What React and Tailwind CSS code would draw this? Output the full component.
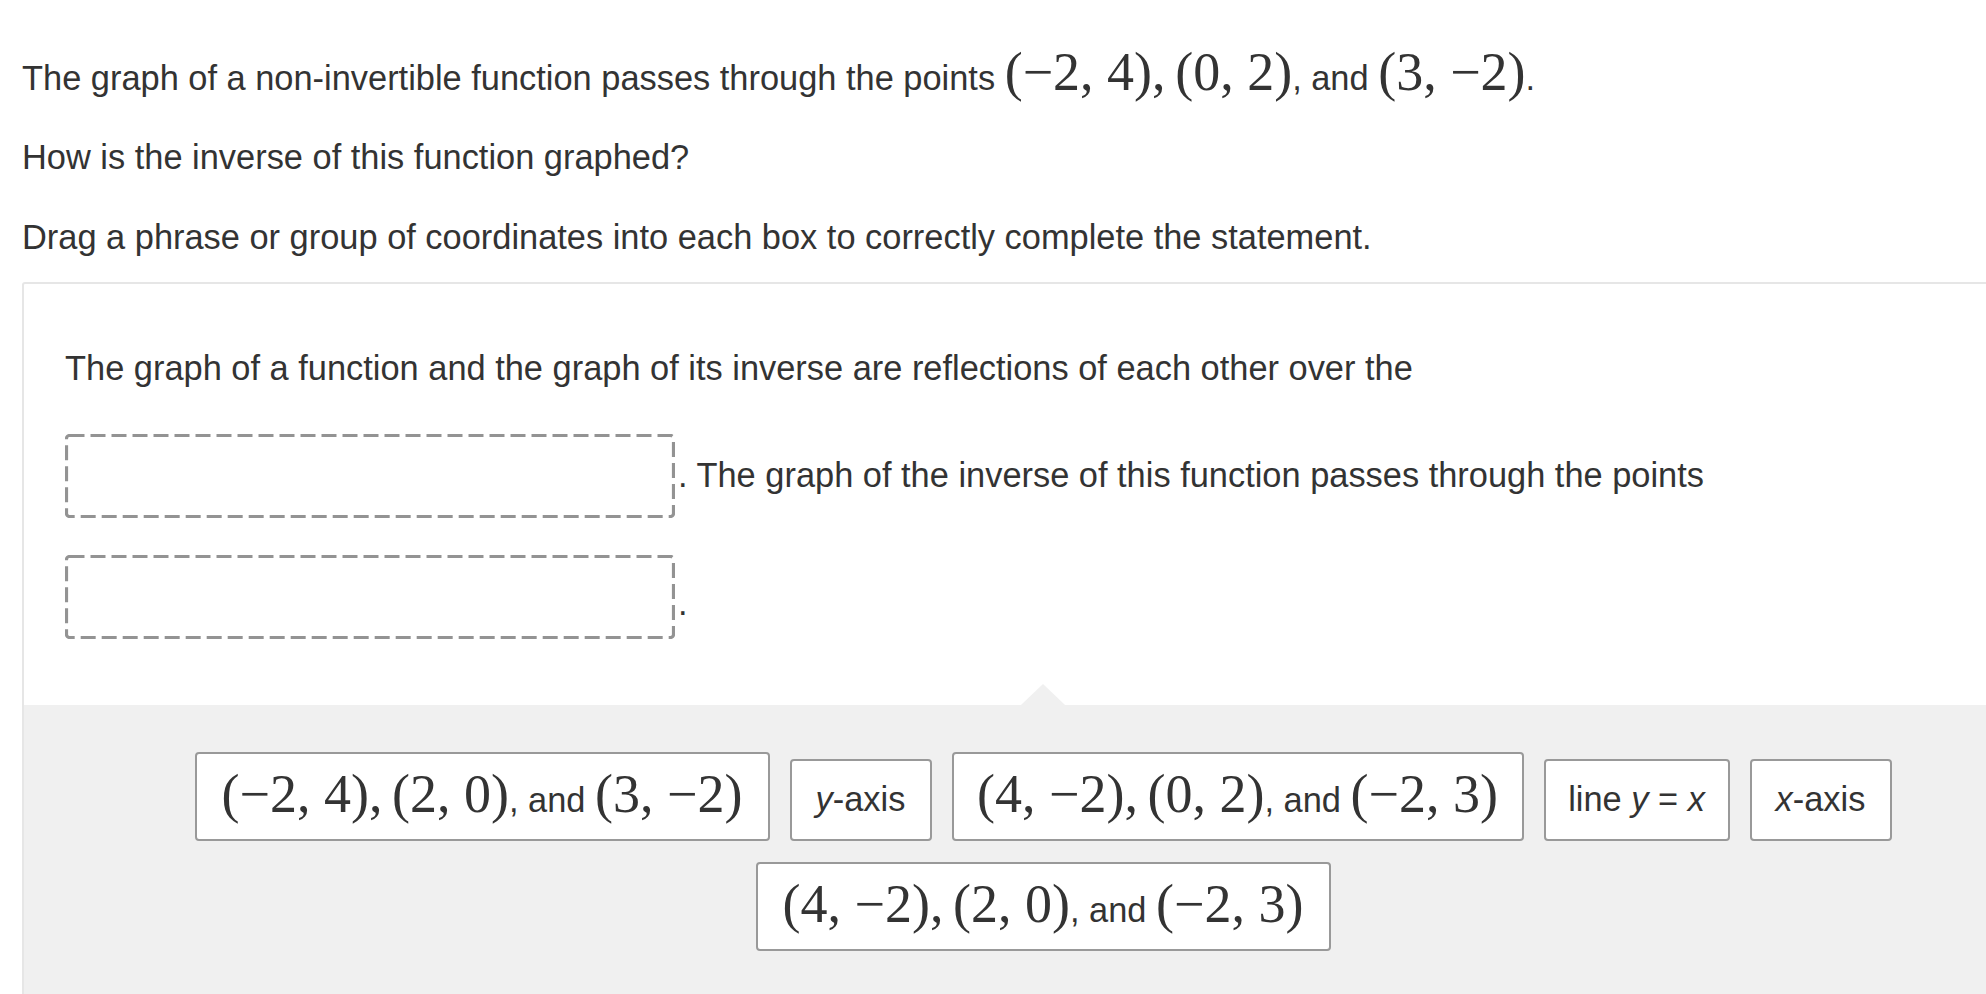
import React from "react";

const M = ({ children }) => (
  <span className="text-[54px] leading-none" style={{ fontFamily: '"Liberation Serif", "Times New Roman", serif' }}>
    {children}
  </span>
);

const I = ({ children }) => <span className="italic">{children}</span>;

function DashedBox() {
  return (
    <div className="relative w-[610px] h-[84px] shrink-0">
      <svg className="absolute inset-0" width="610" height="84" viewBox="0 0 610 84">
        <rect x="1.5" y="1.5" width="607" height="81" rx="3" fill="none" stroke="#939393" strokeWidth="3.2" strokeDasharray="15 6" />
      </svg>
    </div>
  );
}

function Chip({ children, w, tall }) {
  return (
    <div
      className={`bg-white border-2 border-[#999999] rounded-[4px] flex items-center justify-center whitespace-nowrap ${tall ? "h-[89px]" : "h-[82px]"}`}
      style={{ width: w }}
    >
      <span className="text-[34.4px]">{children}</span>
    </div>
  );
}

export default function App() {
  return (
    <div
      className="w-full h-[994px] overflow-hidden bg-white text-[#333333] text-[34.4px]"
      style={{ fontFamily: '"Liberation Sans", Arial, sans-serif' }}
    >
      <div className="pl-[22px] pt-[32px]">
        <div className="h-[86px] flex items-center whitespace-nowrap">
          <span>
            The graph of a non-invertible function passes through the points <M>(−2, 4),</M> <M>(0, 2)</M>, and <M>(3, −2)</M>.
          </span>
        </div>
        <div className="h-[80px] flex items-center">
          <span>How is the inverse of this function graphed?</span>
        </div>
        <div className="h-[80px] flex items-center">
          <span>Drag a phrase or group of coordinates into each box to correctly complete the statement.</span>
        </div>

        <div className="mt-[4px] w-[2042px] border-2 border-[#e6e6e6] rounded-[3px]">
          <div className="pl-[41px] pt-[61px]">
            <div className="h-[48px] flex items-center">
              <span>The graph of a function and the graph of its inverse are reflections of each other over the</span>
            </div>
            <div className="mt-[41px] flex items-center">
              <DashedBox />
              <span className="ml-[3px]">. The graph of the inverse of this function passes through the points</span>
            </div>
            <div className="mt-[37px] flex items-center">
              <DashedBox />
              <span className="ml-[3px] mt-[14px]">.</span>
            </div>
          </div>

          <div className="relative mt-[66px] bg-[#f0f0f0] pt-[47px] pb-[60px] px-[40px]">
            <div className="absolute left-1/2 -translate-x-1/2 -top-[21px] w-0 h-0 border-l-[22px] border-r-[22px] border-b-[21px] border-l-transparent border-r-transparent border-b-[#f0f0f0]" />
            <div className="flex flex-wrap justify-center items-end gap-x-[20px] gap-y-[21px]">
              <Chip w={575} tall>
                <M>(−2, 4),</M> <M>(2, 0)</M>, and <M>(3, −2)</M>
              </Chip>
              <Chip w={142}>
                <I>y</I>-axis
              </Chip>
              <Chip w={572} tall>
                <M>(4, −2),</M> <M>(0, 2)</M>, and <M>(−2, 3)</M>
              </Chip>
              <Chip w={186}>
                line <I>y</I> = <I>x</I>
              </Chip>
              <Chip w={142}>
                <I>x</I>-axis
              </Chip>
              <Chip w={575} tall>
                <M>(4, −2),</M> <M>(2, 0)</M>, and <M>(−2, 3)</M>
              </Chip>
            </div>
          </div>
        </div>
      </div>
    </div>
  );
}
